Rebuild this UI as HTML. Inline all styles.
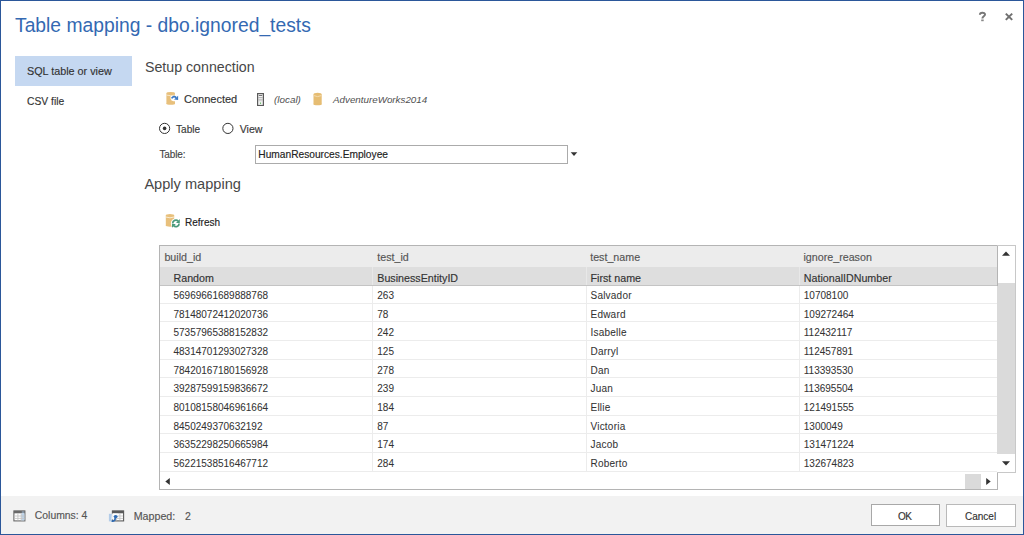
<!DOCTYPE html>
<html><head><meta charset="utf-8"><style>
html,body{margin:0;padding:0;width:1024px;height:535px;overflow:hidden;background:#fff;}
.t{position:absolute;font-family:"Liberation Sans",sans-serif;line-height:1;white-space:nowrap;-webkit-text-stroke:0.15px currentColor;}
.r{position:absolute;}
</style></head><body>
<div class="r" style="left:0px;top:0px;width:1024px;height:535px;box-sizing:border-box;border:1px solid #2b579a;"></div>
<div class="r" style="left:1px;top:495.7px;width:1022px;height:38.3px;background:#f2f2f2;"></div>
<div class="t " style="left:15.00px;top:15.66px;font-size:19.3px;color:#3469b2;-webkit-text-stroke:0;">Table mapping - dbo.ignored_tests</div>
<svg class="r" style="left:976px;top:9px" width="14" height="16" viewBox="0 0 14 16">
<path d="M3.9 5.7 C3.9 3.4 9.0 3.1 9.0 5.5 C9.0 7.3 6.4 7.3 6.4 9.4" fill="none" stroke="#777" stroke-width="2"/>
<rect x="5.2" y="10.5" width="2.5" height="1.7" fill="#888"/></svg>
<svg class="r" style="left:1003px;top:11px" width="12" height="12" viewBox="0 0 12 12">
<path d="M2.8 2.6 L9.2 8.9 M9.2 2.6 L2.8 8.9" stroke="#707070" stroke-width="2"/></svg>
<div class="r" style="left:15px;top:56px;width:117px;height:30px;background:#c5d8f1;"></div>
<div class="t " style="left:27.00px;top:65.96px;font-size:10.8px;color:#333;">SQL table or view</div>
<div class="t " style="left:27.00px;top:97.08px;font-size:10.3px;color:#333;">CSV file</div>
<div class="t " style="left:145.00px;top:59.68px;font-size:14.2px;color:#474747;-webkit-text-stroke:0;">Setup connection</div>
<svg class="r" style="left:165px;top:91px" width="15" height="15" viewBox="0 0 15 15">
<rect x="1.4" y="2.3" width="8.6" height="10.6" fill="#e8c07c"/>
<ellipse cx="5.7" cy="12.8" rx="4.3" ry="1" fill="#e8c07c"/>
<ellipse cx="5.7" cy="2.3" rx="4.3" ry="1.4" fill="#e8c07c"/>
<path d="M1.5 4.1 Q5.7 5.3 9.9 4.1" fill="none" stroke="#fbf0dc" stroke-width="0.8"/>
<path d="M5.6 5.0 L14 4.6 L14 10.2 L8.5 10.2 Q6 10 5.6 7.5 Z" fill="#fff"/>
<path d="M6.6 7.4 Q8.6 4.4 11.2 6.6" fill="none" stroke="#3b79c5" stroke-width="1.7"/>
<path d="M13.1 4.8 L13.1 9.0 L9.0 8.6 Z" fill="#3b79c5"/>
</svg>
<div class="t " style="left:184.00px;top:93.79px;font-size:11px;color:#333;">Connected</div>
<svg class="r" style="left:256.5px;top:93px" width="8" height="13" viewBox="0 0 8 13">
<rect x="0.6" y="0.6" width="5.8" height="11.9" fill="#f6f6f6" stroke="#5a5a5a" stroke-width="1.2"/>
<rect x="1.8" y="2.0" width="3.4" height="0.9" fill="#666"/>
<rect x="1.2" y="4.2" width="4.6" height="0.8" fill="#aaa"/>
<rect x="1.2" y="5.8" width="4.6" height="0.8" fill="#aaa"/>
<rect x="1.2" y="7.4" width="4.6" height="0.8" fill="#bbb"/>
<rect x="2.9" y="9.6" width="1.2" height="1.1" fill="#4a4"/>
</svg>
<div class="t " style="left:274.00px;top:94.62px;font-size:9.9px;color:#505050;font-style:italic;-webkit-text-stroke:0;">(local)</div>
<svg class="r" style="left:313px;top:92px" width="10" height="14" viewBox="0 0 10 14">
<ellipse cx="4.6" cy="2.6" rx="4.1" ry="1.8" fill="#e6bd73"/>
<rect x="0.5" y="2.6" width="8.2" height="9.6" fill="#e6bd73"/>
<ellipse cx="4.6" cy="12.2" rx="4.1" ry="1" fill="#e6bd73"/>
<path d="M0.8 3.6 Q4.6 5.6 8.4 3.6" fill="none" stroke="#f6e3c0" stroke-width="0.8"/>
</svg>
<div class="t " style="left:333.00px;top:94.70px;font-size:9.8px;color:#505050;font-style:italic;-webkit-text-stroke:0;">AdventureWorks2014</div>
<svg class="r" style="left:158px;top:122px" width="13" height="13" viewBox="0 0 13 13">
<circle cx="6.6" cy="6.4" r="5.1" fill="#fff" stroke="#333" stroke-width="1"/>
<circle cx="6.6" cy="6.4" r="1.8" fill="#333"/></svg>
<svg class="r" style="left:221px;top:122px" width="13" height="13" viewBox="0 0 13 13">
<circle cx="6.9" cy="6.4" r="5.1" fill="#fff" stroke="#333" stroke-width="1"/></svg>
<div class="t " style="left:176.00px;top:125.15px;font-size:10.1px;color:#3a3a3a;">Table</div>
<div class="t " style="left:239.70px;top:123.73px;font-size:10.6px;color:#3a3a3a;">View</div>
<div class="t " style="left:159.50px;top:149.63px;font-size:10px;color:#444;letter-spacing:-0.15px;">Table:</div>
<div class="r" style="left:255px;top:145px;width:313px;height:18.6px;box-sizing:border-box;border:1px solid #ababab;background:#fff;"></div>
<div class="t " style="left:258.30px;top:150.07px;font-size:10.2px;color:#222;">HumanResources.Employee</div>
<svg class="r" style="left:570px;top:151px" width="8" height="6" viewBox="0 0 8 6">
<path d="M0.7 1.2 L7.3 1.2 L4 5 Z" fill="#333"/></svg>
<div class="t " style="left:144.40px;top:177.24px;font-size:14.6px;color:#474747;-webkit-text-stroke:0;">Apply mapping</div>
<svg class="r" style="left:164px;top:212px" width="17" height="17" viewBox="0 0 17 17">
<rect x="1.8" y="3.4" width="8.4" height="10.4" fill="#e8c07c"/>
<ellipse cx="6" cy="13.6" rx="4.2" ry="1.1" fill="#e8c07c"/>
<ellipse cx="6" cy="3.4" rx="4.2" ry="1.5" fill="#e8c07c"/>
<path d="M1.9 5.0 Q6 6.6 10.1 5.0" fill="none" stroke="#fbf0dc" stroke-width="0.9"/>
<circle cx="11.9" cy="11.4" r="5" fill="#fff"/>
<path d="M8.7 11.4 A3.2 3.2 0 0 1 14.2 9.1" fill="none" stroke="#4a9a7b" stroke-width="1.7"/>
<path d="M15.1 11.4 A3.2 3.2 0 0 1 9.6 13.7" fill="none" stroke="#4a9a7b" stroke-width="1.7"/>
<path d="M15.8 7.0 L15.8 10.9 L12.0 10.9 Z" fill="#4a9a7b"/>
<path d="M8.0 15.8 L8.0 11.9 L11.8 11.9 Z" fill="#4a9a7b"/>
</svg>
<div class="t " style="left:185.00px;top:217.63px;font-size:10px;color:#222;">Refresh</div>
<div class="r" style="left:159px;top:245px;width:839px;height:245px;box-sizing:border-box;border:1px solid #b4b4b4;background:#fff;"></div>
<div class="r" style="left:160px;top:246px;width:838px;height:21px;background:#ececec;"></div>
<div class="r" style="left:160px;top:266.6px;width:838px;height:18px;background:#dedede;"></div>
<div class="r" style="left:160px;top:284.6px;width:838px;height:1.7px;background:#c4c4c4;"></div>
<div class="r" style="left:372.3px;top:266.6px;width:1px;height:18px;background:#e8e8e8;"></div>
<div class="r" style="left:585.8px;top:266.6px;width:1px;height:18px;background:#e8e8e8;"></div>
<div class="r" style="left:798.8px;top:266.6px;width:1px;height:18px;background:#e8e8e8;"></div>
<div class="t " style="left:164.40px;top:252.14px;font-size:10.7px;color:#555;">build_id</div>
<div class="t " style="left:173.50px;top:272.84px;font-size:10.7px;color:#333;">Random</div>
<div class="t " style="left:377.30px;top:252.14px;font-size:10.7px;color:#555;">test_id</div>
<div class="t " style="left:377.30px;top:272.84px;font-size:10.7px;color:#333;">BusinessEntityID</div>
<div class="t " style="left:590.20px;top:252.14px;font-size:10.7px;color:#555;">test_name</div>
<div class="t " style="left:590.50px;top:272.84px;font-size:10.7px;color:#333;">First name</div>
<div class="t " style="left:803.50px;top:252.14px;font-size:10.7px;color:#555;">ignore_reason</div>
<div class="t " style="left:803.80px;top:272.84px;font-size:10.7px;color:#333;">NationalIDNumber</div>
<div class="r" style="left:160px;top:302.77px;width:837px;height:1px;background:#ececec;"></div>
<div class="t " style="left:173.50px;top:291.04px;font-size:10px;color:#333;-webkit-text-stroke:0.05px #333;">56969661689888768</div>
<div class="t " style="left:377.30px;top:291.04px;font-size:10px;color:#333;-webkit-text-stroke:0.05px #333;">263</div>
<div class="t " style="left:590.50px;top:291.04px;font-size:10px;color:#333;-webkit-text-stroke:0.05px #333;letter-spacing:0.22px;">Salvador</div>
<div class="t " style="left:803.80px;top:291.04px;font-size:10px;color:#333;-webkit-text-stroke:0.05px #333;">10708100</div>
<div class="r" style="left:160px;top:321.44px;width:837px;height:1px;background:#ececec;"></div>
<div class="t " style="left:173.50px;top:309.71px;font-size:10px;color:#333;-webkit-text-stroke:0.05px #333;">78148072412020736</div>
<div class="t " style="left:377.30px;top:309.71px;font-size:10px;color:#333;-webkit-text-stroke:0.05px #333;">78</div>
<div class="t " style="left:590.50px;top:309.71px;font-size:10px;color:#333;-webkit-text-stroke:0.05px #333;letter-spacing:0.22px;">Edward</div>
<div class="t " style="left:803.80px;top:309.71px;font-size:10px;color:#333;-webkit-text-stroke:0.05px #333;">109272464</div>
<div class="r" style="left:160px;top:340.11px;width:837px;height:1px;background:#ececec;"></div>
<div class="t " style="left:173.50px;top:328.38px;font-size:10px;color:#333;-webkit-text-stroke:0.05px #333;">57357965388152832</div>
<div class="t " style="left:377.30px;top:328.38px;font-size:10px;color:#333;-webkit-text-stroke:0.05px #333;">242</div>
<div class="t " style="left:590.50px;top:328.38px;font-size:10px;color:#333;-webkit-text-stroke:0.05px #333;letter-spacing:0.22px;">Isabelle</div>
<div class="t " style="left:803.80px;top:328.38px;font-size:10px;color:#333;-webkit-text-stroke:0.05px #333;">112432117</div>
<div class="r" style="left:160px;top:358.78px;width:837px;height:1px;background:#ececec;"></div>
<div class="t " style="left:173.50px;top:347.05px;font-size:10px;color:#333;-webkit-text-stroke:0.05px #333;">48314701293027328</div>
<div class="t " style="left:377.30px;top:347.05px;font-size:10px;color:#333;-webkit-text-stroke:0.05px #333;">125</div>
<div class="t " style="left:590.50px;top:347.05px;font-size:10px;color:#333;-webkit-text-stroke:0.05px #333;letter-spacing:0.22px;">Darryl</div>
<div class="t " style="left:803.80px;top:347.05px;font-size:10px;color:#333;-webkit-text-stroke:0.05px #333;">112457891</div>
<div class="r" style="left:160px;top:377.45px;width:837px;height:1px;background:#ececec;"></div>
<div class="t " style="left:173.50px;top:365.72px;font-size:10px;color:#333;-webkit-text-stroke:0.05px #333;">78420167180156928</div>
<div class="t " style="left:377.30px;top:365.72px;font-size:10px;color:#333;-webkit-text-stroke:0.05px #333;">278</div>
<div class="t " style="left:590.50px;top:365.72px;font-size:10px;color:#333;-webkit-text-stroke:0.05px #333;letter-spacing:0.22px;">Dan</div>
<div class="t " style="left:803.80px;top:365.72px;font-size:10px;color:#333;-webkit-text-stroke:0.05px #333;">113393530</div>
<div class="r" style="left:160px;top:396.12px;width:837px;height:1px;background:#ececec;"></div>
<div class="t " style="left:173.50px;top:384.39px;font-size:10px;color:#333;-webkit-text-stroke:0.05px #333;">39287599159836672</div>
<div class="t " style="left:377.30px;top:384.39px;font-size:10px;color:#333;-webkit-text-stroke:0.05px #333;">239</div>
<div class="t " style="left:590.50px;top:384.39px;font-size:10px;color:#333;-webkit-text-stroke:0.05px #333;letter-spacing:0.22px;">Juan</div>
<div class="t " style="left:803.80px;top:384.39px;font-size:10px;color:#333;-webkit-text-stroke:0.05px #333;">113695504</div>
<div class="r" style="left:160px;top:414.79px;width:837px;height:1px;background:#ececec;"></div>
<div class="t " style="left:173.50px;top:403.06px;font-size:10px;color:#333;-webkit-text-stroke:0.05px #333;">80108158046961664</div>
<div class="t " style="left:377.30px;top:403.06px;font-size:10px;color:#333;-webkit-text-stroke:0.05px #333;">184</div>
<div class="t " style="left:590.50px;top:403.06px;font-size:10px;color:#333;-webkit-text-stroke:0.05px #333;letter-spacing:0.22px;">Ellie</div>
<div class="t " style="left:803.80px;top:403.06px;font-size:10px;color:#333;-webkit-text-stroke:0.05px #333;">121491555</div>
<div class="r" style="left:160px;top:433.46px;width:837px;height:1px;background:#ececec;"></div>
<div class="t " style="left:173.50px;top:421.73px;font-size:10px;color:#333;-webkit-text-stroke:0.05px #333;">8450249370632192</div>
<div class="t " style="left:377.30px;top:421.73px;font-size:10px;color:#333;-webkit-text-stroke:0.05px #333;">87</div>
<div class="t " style="left:590.50px;top:421.73px;font-size:10px;color:#333;-webkit-text-stroke:0.05px #333;letter-spacing:0.22px;">Victoria</div>
<div class="t " style="left:803.80px;top:421.73px;font-size:10px;color:#333;-webkit-text-stroke:0.05px #333;">1300049</div>
<div class="r" style="left:160px;top:452.13px;width:837px;height:1px;background:#ececec;"></div>
<div class="t " style="left:173.50px;top:440.40px;font-size:10px;color:#333;-webkit-text-stroke:0.05px #333;">36352298250665984</div>
<div class="t " style="left:377.30px;top:440.40px;font-size:10px;color:#333;-webkit-text-stroke:0.05px #333;">174</div>
<div class="t " style="left:590.50px;top:440.40px;font-size:10px;color:#333;-webkit-text-stroke:0.05px #333;letter-spacing:0.22px;">Jacob</div>
<div class="t " style="left:803.80px;top:440.40px;font-size:10px;color:#333;-webkit-text-stroke:0.05px #333;">131471224</div>
<div class="r" style="left:160px;top:470.80px;width:837px;height:1px;background:#ececec;"></div>
<div class="t " style="left:173.50px;top:459.07px;font-size:10px;color:#333;-webkit-text-stroke:0.05px #333;">56221538516467712</div>
<div class="t " style="left:377.30px;top:459.07px;font-size:10px;color:#333;-webkit-text-stroke:0.05px #333;">284</div>
<div class="t " style="left:590.50px;top:459.07px;font-size:10px;color:#333;-webkit-text-stroke:0.05px #333;letter-spacing:0.22px;">Roberto</div>
<div class="t " style="left:803.80px;top:459.07px;font-size:10px;color:#333;-webkit-text-stroke:0.05px #333;">132674823</div>
<div class="r" style="left:372.3px;top:286.3px;width:1px;height:185.5px;background:#ececec;"></div>
<div class="r" style="left:585.8px;top:286.3px;width:1px;height:185.5px;background:#ececec;"></div>
<div class="r" style="left:798.8px;top:286.3px;width:1px;height:185.5px;background:#ececec;"></div>
<svg class="r" style="left:164px;top:477px" width="7" height="9" viewBox="0 0 7 9">
<path d="M5.8 1 L5.8 8 L1.3 4.5 Z" fill="#333"/></svg>
<div class="r" style="left:965px;top:473.5px;width:16px;height:15.5px;background:#dadada;"></div>
<svg class="r" style="left:985px;top:477px" width="7" height="9" viewBox="0 0 7 9">
<path d="M1.2 1 L1.2 8 L5.7 4.5 Z" fill="#333"/></svg>
<div class="r" style="left:997px;top:245px;width:19px;height:228px;box-sizing:border-box;border:1px solid #c8c8c8;border-left:none;background:#fff;"></div>
<div class="r" style="left:997px;top:283px;width:18px;height:171px;background:#dadada;"></div>
<svg class="r" style="left:1001px;top:250px" width="10" height="7" viewBox="0 0 10 7">
<path d="M1 5.8 L9 5.8 L5 1.5 Z" fill="#333"/></svg>
<svg class="r" style="left:1001px;top:460px" width="10" height="7" viewBox="0 0 10 7">
<path d="M1 1.2 L9 1.2 L5 5.5 Z" fill="#333"/></svg>
<div class="r" style="left:997px;top:246px;width:1px;height:40px;background:#b4b4b4;"></div>
<svg class="r" style="left:12.5px;top:509.5px" width="13" height="12" viewBox="0 0 13 12">
<rect x="0.9" y="0.9" width="11" height="10" fill="#fff" stroke="#696969" stroke-width="1.1"/>
<rect x="0.9" y="0.9" width="11" height="2.4" fill="#696969"/>
<rect x="8.4" y="3.3" width="3" height="7.1" fill="#bcd4ec"/>
<path d="M1.4 6.0 H11.4 M1.4 8.4 H11.4 M4.9 3.3 V10.4 M8.2 3.3 V10.4" stroke="#c4c4c4" stroke-width="0.9"/>
<rect x="8.8" y="1.5" width="2.5" height="1.1" fill="#9eb6d0"/>
</svg>
<div class="t " style="left:34.80px;top:511.10px;font-size:10.4px;color:#555;">Columns: 4</div>
<svg class="r" style="left:108px;top:509.5px" width="17" height="12" viewBox="0 0 17 12">
<rect x="4.4" y="0.9" width="11.2" height="10" fill="#fff" stroke="#5a5a5a" stroke-width="1.1"/>
<rect x="4.4" y="0.9" width="11.2" height="2.4" fill="#5a5a5a"/>
<path d="M4.9 6.0 H15.1 M4.9 8.4 H15.1 M8.4 3.3 V10.4 M11.9 3.3 V10.4" stroke="#c4c4c4" stroke-width="0.9"/>
<rect x="0.9" y="3.8" width="3" height="7.6" fill="#b3cce8"/>
<path d="M3.4 9.4 L6.8 9.4 L9.6 6 L9.6 3.6 L4 3.6 Z" fill="#fff" opacity="0.9"/>
<path d="M3.6 11.3 C6.6 11.2 7.6 9.4 6.9 7.8" fill="none" stroke="#2f6cb5" stroke-width="1.7"/>
<ellipse cx="7.6" cy="6.6" rx="2" ry="1.7" fill="#2f6cb5"/>
</svg>
<div class="t " style="left:133.70px;top:510.84px;font-size:10.7px;color:#555;">Mapped:</div>
<div class="t " style="left:185.00px;top:511.01px;font-size:10.5px;color:#555;">2</div>
<div class="r" style="left:870.6px;top:503.6px;width:69.6px;height:22.8px;box-sizing:border-box;border:1.7px solid #a8a8a8;background:#fff;"></div>
<div class="t " style="left:898.00px;top:511.74px;font-size:10px;color:#333;letter-spacing:-0.5px;">OK</div>
<div class="r" style="left:946px;top:503.5px;width:70px;height:23px;box-sizing:border-box;border:1px solid #b9b9b9;background:#fff;"></div>
<div class="t " style="left:965.00px;top:511.74px;font-size:10px;color:#333;">Cancel</div>
</body></html>
